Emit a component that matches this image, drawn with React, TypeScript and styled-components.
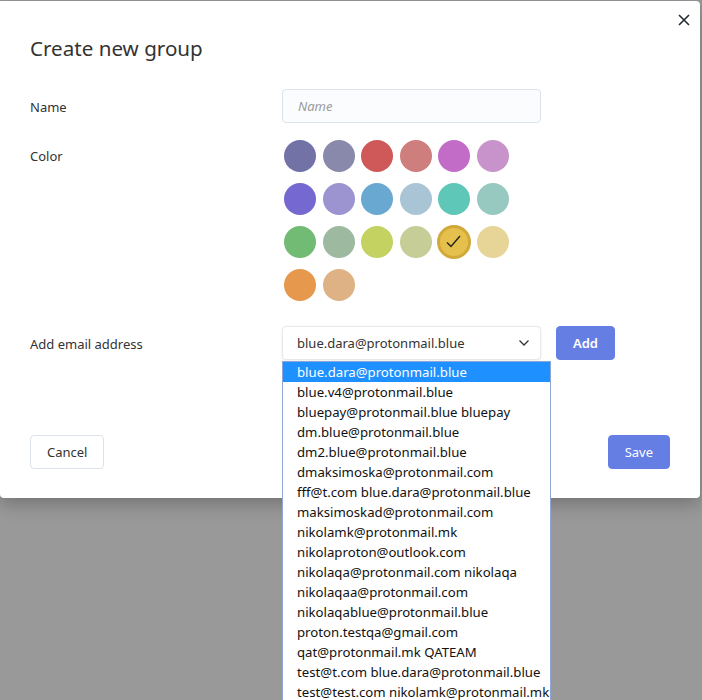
import React from 'react';
import styled, {createGlobalStyle} from 'styled-components';

const GlobalStyle = createGlobalStyle`
  html, body {
    margin: 0;
    padding: 0;
    background: #999999;
    font-family: "Noto Sans", "Open Sans", Arial, sans-serif;
    color: #333;
  }
`;

const Page = styled.div`
  height: 700px;
  padding: 1px 2px 0 0;
  box-sizing: border-box;
  background: #999999;
  overflow: hidden;
`;

const Modal = styled.div`
  position: relative;
  width: 700px;
  height: 497px;
  background: #fff;
  border-radius: 0 4px 4px 4px;
  box-shadow: 0 6px 18px rgba(0, 0, 0, 0.25);
  display: flex;
  flex-direction: column;
  padding: 0 30px 29px;
  box-sizing: border-box;
`;

const CloseBtn = styled.button`
  position: absolute;
  top: 10px;
  right: 7px;
  width: 18px;
  height: 18px;
  padding: 0;
  border: none;
  background: none;
  display: flex;
  align-items: center;
  justify-content: center;
`;

const Title = styled.h2`
  margin: 30px 0 24px;
  font-size: 20.6px;
  line-height: 34px;
  font-weight: 400;
  color: #333;
`;

const Row = styled.div<{$top?: number}>`
  display: grid;
  grid-template-columns: 252px 1fr;
  align-items: start;
  margin-top: ${p => p.$top ?? 0}px;
`;

const Label = styled.label<{$h?: number}>`
  font-size: 13px;
  padding-top: 2px;
  line-height: ${p => p.$h ?? 32}px;
  color: #333;
`;

const TextInput = styled.input`
  width: 259px;
  height: 34px;
  box-sizing: border-box;
  border: 1px solid #dde3ea;
  border-radius: 4px;
  background: #fbfcfe;
  padding: 0 15px;
  font-family: inherit;
  font-size: 13px;
  outline: none;
  &::placeholder {
    color: #9a9a9a;
    font-style: italic;
  }
`;

const Swatches = styled.div`
  display: grid;
  grid-template-columns: repeat(6, 32px);
  column-gap: 6.6px;
  row-gap: 11px;
  padding-left: 2px;
`;

const Swatch = styled.div<{$color: string; $selected?: boolean}>`
  width: 32px;
  height: 32px;
  border-radius: 50%;
  background: ${p => p.$color};
  ${p => p.$selected && `
    width: 34px;
    height: 34px;
    margin: -1px;
    box-sizing: border-box;
    border: 3px solid #d0a93a;
    display: flex;
    align-items: center;
    justify-content: center;
  `}
`;

const EmailControls = styled.div`
  display: flex;
  gap: 15px;
`;

const SelectWrap = styled.div`
  position: relative;
  width: 259px;
`;

const SelectBox = styled.div`
  height: 34px;
  box-sizing: border-box;
  border: 1px solid #e6e8ec;
  border-radius: 4px;
  background: #fff;
  box-shadow: 0 1px 3px rgba(0, 0, 0, 0.08);
  display: flex;
  align-items: center;
  justify-content: space-between;
  padding: 0 10px 0 14px;
  font-size: 13px;
  color: #333;
`;

const Options = styled.ul`
  position: absolute;
  top: 35px;
  left: 0;
  width: 269px;
  margin: 0;
  padding: 0;
  list-style: none;
  background: #fff;
  border: 1px solid #8ea6d6;
  box-sizing: border-box;
  z-index: 2;
`;

const Option = styled.li<{$active?: boolean}>`
  height: 20px;
  line-height: 20px;
  padding-left: 14px;
  font-size: 13.2px;
  white-space: nowrap;
  color: ${p => (p.$active ? '#fff' : '#111')};
  background: ${p => (p.$active ? '#1e90ff' : 'transparent')};
`;

const Button = styled.button<{$primary?: boolean; $bold?: boolean}>`
  height: 34px;
  padding: 0 16px;
  border-radius: 4px;
  font-family: inherit;
  font-size: 13px;
  border: 1px solid ${p => (p.$primary ? '#657ee4' : '#dde3ea')};
  background: ${p => (p.$primary ? '#657ee4' : '#fff')};
  color: ${p => (p.$primary ? '#fff' : '#333')};
  font-weight: ${p => (p.$bold ? 600 : 400)};
`;

const Footer = styled.div`
  margin-top: auto;
  display: flex;
  justify-content: space-between;
`;

const colors = [
    '#7272a7', '#8989ac', '#cf5858', '#cf7e7e', '#c26cc7', '#c793ca',
    '#7569d1', '#9b94d1', '#69a9d1', '#a8c4d5', '#5ec7b7', '#97c9c1',
    '#72bb75', '#9db99f', '#c3d261', '#c6cd97', '#e6c04c', '#e6d597',
    '#e6984c', '#dfb286',
];

const emails = [
    'blue.dara@protonmail.blue',
    'blue.v4@protonmail.blue',
    'bluepay@protonmail.blue bluepay',
    'dm.blue@protonmail.blue',
    'dm2.blue@protonmail.blue',
    'dmaksimoska@protonmail.com',
    'fff@t.com blue.dara@protonmail.blue',
    'maksimoskad@protonmail.com',
    'nikolamk@protonmail.mk',
    'nikolaproton@outlook.com',
    'nikolaqa@protonmail.com nikolaqa',
    'nikolaqaa@protonmail.com',
    'nikolaqablue@protonmail.blue',
    'proton.testqa@gmail.com',
    'qat@protonmail.mk QATEAM',
    'test@t.com blue.dara@protonmail.blue',
    'test@test.com nikolamk@protonmail.mk',
];

const App = () => {
    return (
        <Page>
            <GlobalStyle/>
            <Modal>
                <CloseBtn aria-label="Close">
                    <svg width="12" height="12" viewBox="0 0 12 12">
                        <path d="M1 1L11 11M11 1L1 11" stroke="#262a33" strokeWidth="1.6"/>
                    </svg>
                </CloseBtn>
                <Title>Create new group</Title>

                <Row>
                    <Label>Name</Label>
                    <TextInput placeholder="Name"/>
                </Row>

                <Row $top={17}>
                    <Label $h={28}>Color</Label>
                    <Swatches>
                        {colors.map(c => (
                            <Swatch key={c} $color={c} $selected={c === '#e6c04c'}>
                                {c === '#e6c04c' && (
                                    <svg width="18" height="16" viewBox="0 0 18 16">
                                        <polyline points="2,8.5 6,12.5 15,2" fill="none" stroke="#222" strokeWidth="1.4"/>
                                    </svg>
                                )}
                            </Swatch>
                        ))}
                    </Swatches>
                </Row>

                <Row $top={25}>
                    <Label>Add email address</Label>
                    <EmailControls>
                        <SelectWrap>
                            <SelectBox>
                                <span>blue.dara@protonmail.blue</span>
                                <svg width="12" height="8" viewBox="0 0 12 8">
                                    <polyline points="1.5,1.5 6,6 10.5,1.5" fill="none" stroke="#333" strokeWidth="1.3"/>
                                </svg>
                            </SelectBox>
                            <Options>
                                {emails.map((e, i) => (
                                    <Option key={e} $active={i === 0}>{e}</Option>
                                ))}
                            </Options>
                        </SelectWrap>
                        <Button $primary $bold>Add</Button>
                    </EmailControls>
                </Row>

                <Footer>
                    <Button>Cancel</Button>
                    <Button $primary>Save</Button>
                </Footer>
            </Modal>
        </Page>
    );
};

export default App;
